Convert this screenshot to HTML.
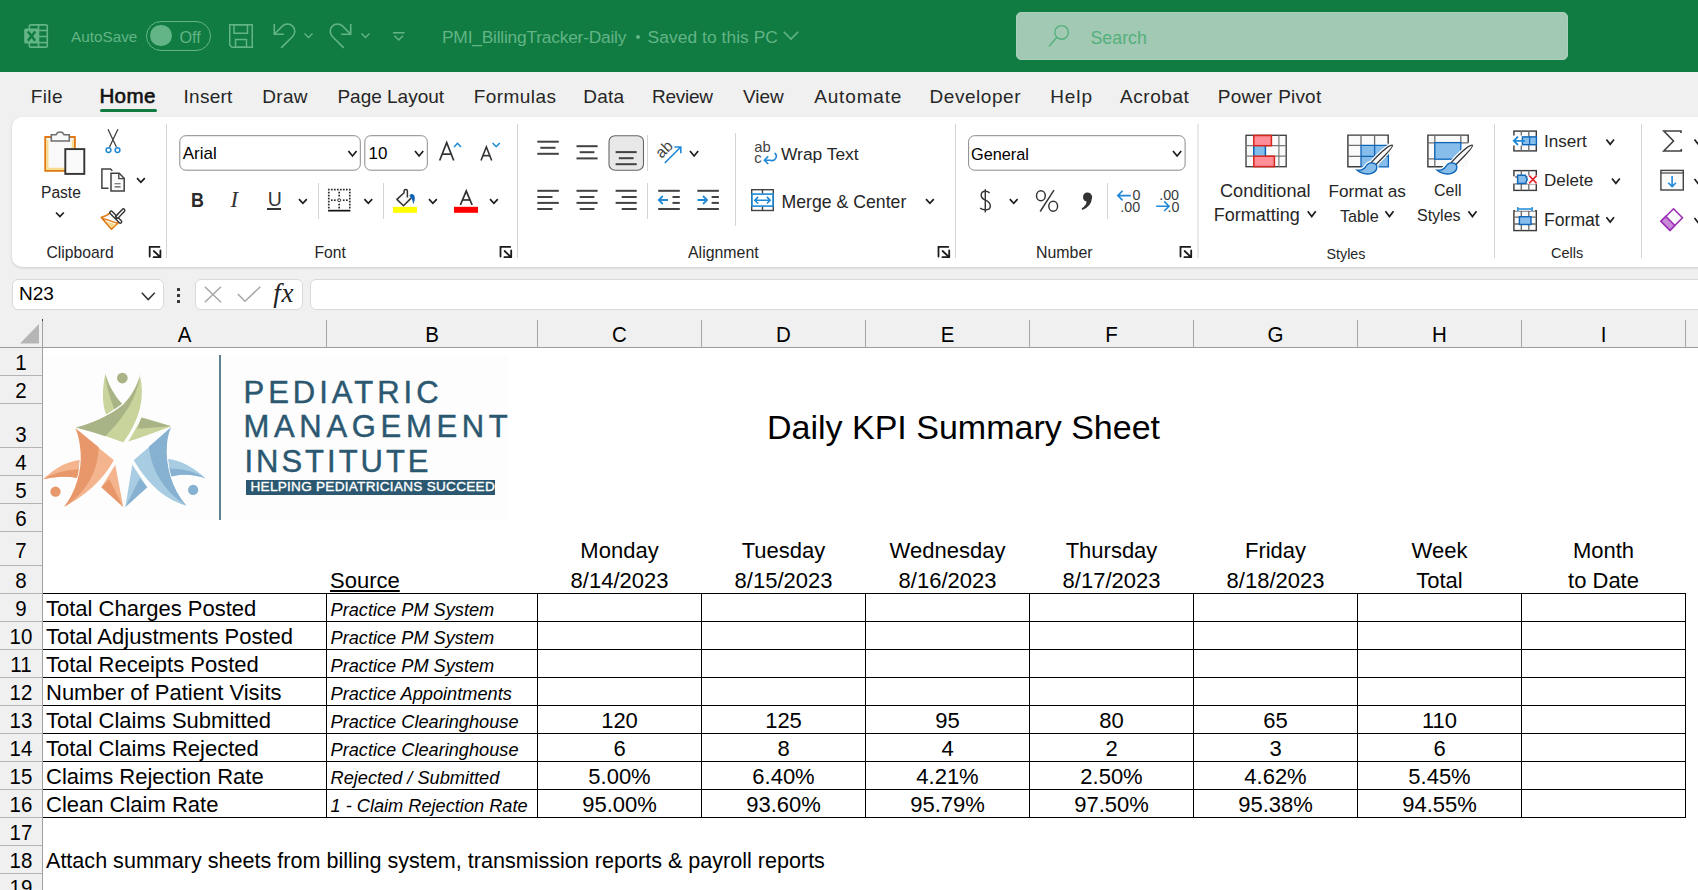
<!DOCTYPE html>
<html><head><meta charset="utf-8"><style>
html,body{margin:0;padding:0;width:1698px;height:890px;overflow:hidden;background:#f0f0f0}
body{position:relative;font-family:"Liberation Sans", sans-serif}
.t{position:absolute;white-space:pre;line-height:0;font-family:"Liberation Sans", sans-serif}
.r{position:absolute}
svg.r{overflow:visible}
</style></head><body>
<div class="r" style="left:0px;top:0px;width:1698px;height:72px;background:#107c41"></div>
<div class="r" style="left:0px;top:72px;width:1698px;height:818px;background:#f0f0f0"></div>
<svg class="r" style="left:24px;top:24px" width="24" height="24" viewBox="0 0 24 24">
<g fill="none" stroke="#63b487" stroke-width="1.6">
<rect x="5.3" y="0.9" width="18" height="22.2" rx="1.4"/>
<line x1="14.5" y1="0.9" x2="14.5" y2="23.1"/>
<line x1="14.5" y1="6.5" x2="23.3" y2="6.5"/>
<line x1="14.5" y1="12.5" x2="23.3" y2="12.5"/>
<line x1="14.5" y1="18.6" x2="23.3" y2="18.6"/>
</g>
<rect x="0.2" y="4.6" width="14.6" height="15" rx="1.5" fill="#63b487"/>
<path d="M3.9 7.5 L11.2 16.8 M11.2 7.5 L3.9 16.8" stroke="#107c41" stroke-width="2.5"/>
</svg>
<div class="t" style="left:71.00px;top:37.00px;font-size:15.3px;color:#63b487;">AutoSave</div>
<div class="r" style="left:146px;top:21px;width:65px;height:30px;box-sizing:border-box;border:1.3px solid #63b487;border-radius:15px"></div>
<div class="r" style="left:150.4px;top:25px;width:21.2px;height:21.2px;background:#63b487;border-radius:50%"></div>
<div class="t" style="left:179.50px;top:36.69px;font-size:16.2px;color:#63b487;">Off</div>
<svg class="r" style="left:229px;top:24px" width="24" height="24" viewBox="0 0 24 24"><g fill="none" stroke="#63b487" stroke-width="1.5">
<path d="M0.75 0.75 H23.25 V23.25 H3 L0.75 21 Z"/>
<rect x="5" y="0.75" width="13.5" height="8.5"/>
<rect x="6.5" y="15.5" width="11" height="7.75"/>
</g></svg>
<svg class="r" style="left:273px;top:24px" width="22" height="24" viewBox="0 0 22 24"><g fill="none" stroke="#63b487" stroke-width="1.6" stroke-linejoin="miter">
<path d="M1.3 0 V10.2 H10.8"/>
<path d="M1.3 10.2 L9.35 2.15 A7.28 7.28 0 0 1 19.65 12.45 L8.2 23.9"/>
</g></svg>
<svg class="r" style="left:304px;top:33px" width="9" height="5" viewBox="0 0 9 5"><path d="M0.5 0.5 L4.5 4.5 L8.5 0.5" fill="none" stroke="#63b487" stroke-width="1.4"/></svg>
<svg class="r" style="left:330px;top:24px" width="22" height="24" viewBox="0 0 22 24"><g fill="none" stroke="#63b487" stroke-width="1.6">
<path d="M20.7 0 V10.2 H11.2"/>
<path d="M20.7 10.2 L12.65 2.15 A7.28 7.28 0 0 0 2.35 12.45 L13.8 23.9"/>
</g></svg>
<svg class="r" style="left:361px;top:33px" width="9" height="5" viewBox="0 0 9 5"><path d="M0.5 0.5 L4.5 4.5 L8.5 0.5" fill="none" stroke="#63b487" stroke-width="1.4"/></svg>
<svg class="r" style="left:393px;top:32px" width="12" height="9" viewBox="0 0 12 9"><path d="M0 0.8 H11.5 M1.5 3.8 L5.75 8 L10 3.8" fill="none" stroke="#63b487" stroke-width="1.5"/></svg>
<div class="t" style="left:442.00px;top:37.37px;font-size:17.4px;color:#63b487;letter-spacing:-0.23px">PMI_BillingTracker-Daily</div>
<div class="r" style="left:635.5px;top:34.6px;width:4px;height:4px;background:#63b487;border-radius:50%"></div>
<div class="t" style="left:647.50px;top:37.37px;font-size:17.4px;color:#63b487;letter-spacing:0.06px">Saved to this PC</div>
<svg class="r" style="left:783px;top:31px" width="16" height="9" viewBox="0 0 16 9"><path d="M0.8 0.8 L8 8 L15.2 0.8" fill="none" stroke="#63b487" stroke-width="1.6"/></svg>
<div class="r" style="left:1016px;top:12px;width:552px;height:47.5px;box-sizing:border-box;background:#a1c9b3;border:1px solid #abcfbb;border-radius:5px"></div>
<svg class="r" style="left:1048px;top:24px" width="22" height="24" viewBox="0 0 22 24"><g fill="none" stroke="#55b07c" stroke-width="1.4">
<circle cx="13.6" cy="8.4" r="6.8"/>
<path d="M8.8 13.2 L1 22.5"/>
</g></svg>
<div class="t" style="left:1090.50px;top:37.63px;font-size:17.8px;color:#55b07c;">Search</div>
<div class="t" style="left:30.80px;top:96.62px;font-size:19px;color:#262626;letter-spacing:0.37px">File</div>
<div class="t" style="left:99.40px;top:96.16px;font-size:20.6px;color:#111;-webkit-text-stroke:0.6px #111;letter-spacing:0.35px">Home</div>
<div class="t" style="left:183.60px;top:96.62px;font-size:19px;color:#262626;letter-spacing:0.24px">Insert</div>
<div class="t" style="left:262.20px;top:96.62px;font-size:19px;color:#262626;letter-spacing:0.33px">Draw</div>
<div class="t" style="left:337.40px;top:96.62px;font-size:19px;color:#262626;letter-spacing:0px">Page Layout</div>
<div class="t" style="left:473.80px;top:96.62px;font-size:19px;color:#262626;letter-spacing:0.43px">Formulas</div>
<div class="t" style="left:583.20px;top:96.62px;font-size:19px;color:#262626;letter-spacing:0.23px">Data</div>
<div class="t" style="left:652.00px;top:96.62px;font-size:19px;color:#262626;letter-spacing:-0.28px">Review</div>
<div class="t" style="left:743.00px;top:96.62px;font-size:19px;color:#262626;letter-spacing:-0.03px">View</div>
<div class="t" style="left:814.20px;top:96.62px;font-size:19px;color:#262626;letter-spacing:0.84px">Automate</div>
<div class="t" style="left:929.60px;top:96.62px;font-size:19px;color:#262626;letter-spacing:0.54px">Developer</div>
<div class="t" style="left:1050.20px;top:96.62px;font-size:19px;color:#262626;letter-spacing:0.93px">Help</div>
<div class="t" style="left:1120.00px;top:96.62px;font-size:19px;color:#262626;letter-spacing:0.57px">Acrobat</div>
<div class="t" style="left:1217.80px;top:96.62px;font-size:19px;color:#262626;letter-spacing:0.2px">Power Pivot</div>
<div class="r" style="left:100.3px;top:108.8px;width:56.5px;height:3.2px;background:#107c41;border-radius:2px"></div>
<div class="r" style="left:12px;top:117px;width:1720px;height:150px;background:#fff;border-radius:10px;box-shadow:0 1px 3px rgba(0,0,0,0.16)"></div>
<svg class="r" style="left:0;top:0" width="1698" height="300" viewBox="0 0 1698 300"><rect x="166" y="124" width="1" height="134" fill="#d4d4d4"/><rect x="517" y="124" width="1" height="134" fill="#d4d4d4"/><rect x="955" y="124" width="1" height="134" fill="#d4d4d4"/><rect x="1197.5" y="124" width="1" height="134" fill="#d4d4d4"/><rect x="1494" y="124" width="1" height="134" fill="#d4d4d4"/><rect x="1641" y="124" width="1" height="134" fill="#d4d4d4"/><rect x="318" y="183" width="1" height="36" fill="#d4d4d4"/><rect x="383" y="183" width="1" height="36" fill="#d4d4d4"/><rect x="647" y="135" width="1" height="36" fill="#d4d4d4"/><rect x="647" y="183" width="1" height="36" fill="#d4d4d4"/><rect x="735" y="133" width="1" height="93" fill="#d4d4d4"/><rect x="1107" y="183" width="1" height="36" fill="#d4d4d4"/>
<rect x="45.3" y="137" width="29.5" height="33.8" fill="#f9f9f9" stroke="#e07b16" stroke-width="2"/>
<path d="M47.4 140 V168.8 H64.5 M72.8 140 V148" fill="none" stroke="#f9dd8f" stroke-width="2.2"/>
<path d="M51.3 141 V134.8 H56 A4.3 4.3 0 0 1 64.1 134.8 H69.3 V141 Z" fill="#f9f9f9" stroke="#6e6e6e" stroke-width="1.6"/>
<rect x="65.3" y="149.1" width="19" height="24.8" fill="#fafafa" stroke="#333" stroke-width="1.9"/>

<path d="M108 129.2 L116.4 147 M117.9 129.2 L109.5 147" fill="none" stroke="#3c3c3c" stroke-width="1.25"/>
<circle cx="108.5" cy="150.1" r="2.4" fill="none" stroke="#1f89d8" stroke-width="1.5"/>
<circle cx="117.5" cy="150.1" r="2.4" fill="none" stroke="#1f89d8" stroke-width="1.5"/>

<path d="M108.5 188.2 H101.9 V168.9 H110.5 L112.3 170.7" fill="none" stroke="#424242" stroke-width="1.5"/>
<path d="M111 173.2 H119.2 L124.2 178.2 V191 H111 Z" fill="#fafafa" stroke="#424242" stroke-width="1.5"/>
<path d="M118.8 173.2 V178.6 H124.2" fill="none" stroke="#424242" stroke-width="1.3"/>
<path d="M114.6 183.7 H120.6 M114.6 186.9 H120.6" stroke="#555" stroke-width="1.1"/>
<path d="M137 178.2 L140.9 182.29999999999998 L144.8 178.2" fill="none" stroke="#1c1c1c" stroke-width="1.7"/>
<path d="M101.3 217.4 Q106.5 216.2 110.9 212.4 L119.6 221.3 Q115.6 225.2 111.5 229.2 Z" fill="#fafafa" stroke="#e07b16" stroke-width="1.7" stroke-linejoin="round"/>
<path d="M102.8 218.3 L118 223.4" stroke="#e07b16" stroke-width="1.4"/>
<path d="M106.6 221.6 L116.2 224.4 L111.6 227.8 Z" fill="#f7d98a"/>
<path d="M111.2 212.6 L120.3 221.7" stroke="#333" stroke-width="4.2" stroke-linecap="round"/>
<path d="M111.2 212.6 L120.3 221.7" stroke="#fff" stroke-width="1.4" stroke-linecap="round"/>
<path d="M117.2 216.8 L123.3 210.4" stroke="#333" stroke-width="4.4" stroke-linecap="round"/>
<path d="M117.6 216.4 L123.3 210.4" stroke="#fff" stroke-width="1.5" stroke-linecap="round"/>
<path d="M56 212.5 L59.9 216.6 L63.8 212.5" fill="none" stroke="#1c1c1c" stroke-width="1.7"/><path d="M149.7 256.6 V246.9 H159.39999999999998" fill="none" stroke="#1c1c1c" stroke-width="1.8" stroke-linecap="round"/><path d="M153.79999999999998 251.0 L159.89999999999998 256.8 M160.39999999999998 250.5 V257.2 H153.6" fill="none" stroke="#1c1c1c" stroke-width="1.8" stroke-linecap="round" stroke-linejoin="round"/>
<rect x="179.8" y="135.7" width="180.5" height="34.5" rx="6" fill="#fff" stroke="#8a8a8a" stroke-width="1"/>
<rect x="364.8" y="135.7" width="62.5" height="34.5" rx="6" fill="#fff" stroke="#8a8a8a" stroke-width="1"/>
<path d="M348.4 151 L352.5 156 L356.59999999999997 151" fill="none" stroke="#1c1c1c" stroke-width="1.7"/><path d="M415 151 L419.1 156 L423.2 151" fill="none" stroke="#1c1c1c" stroke-width="1.7"/><path d="M454 147 L457.5 143.3 L461 147" fill="none" stroke="#1f89d8" stroke-width="1.6"/><path d="M492.6 143 L496.2 146.7 L499.8 143" fill="none" stroke="#1f89d8" stroke-width="1.6"/><path d="M299 199.2 L302.9 203.29999999999998 L306.8 199.2" fill="none" stroke="#1c1c1c" stroke-width="1.7"/><path d="M439.65000000000003 160.5 L446.70000000000005 142.65 L453.75 160.5" fill="none" stroke="#333" stroke-width="1.7" stroke-linejoin="miter"/><path d="M441.96000000000004 154.142 H451.44" stroke="#333" stroke-width="1.7"/><path d="M481.0 160.5 L486.35 147.0 L491.7 160.5" fill="none" stroke="#333" stroke-width="1.6" stroke-linejoin="miter"/><path d="M482.65999999999997 155.638 H490.04" stroke="#333" stroke-width="1.6"/><path d="M460.35 205 L466.25 191.04999999999998 L472.15 205" fill="none" stroke="#333" stroke-width="1.7" stroke-linejoin="miter"/><path d="M462.2 199.968 H470.3" stroke="#333" stroke-width="1.7"/><rect x="327.95" y="188.75" width="1.7" height="1.7" fill="#2a2a2a"/><rect x="330.95" y="188.75" width="1.7" height="1.7" fill="#2a2a2a"/><rect x="333.95" y="188.75" width="1.7" height="1.7" fill="#2a2a2a"/><rect x="336.95" y="188.75" width="1.7" height="1.7" fill="#2a2a2a"/><rect x="339.95" y="188.75" width="1.7" height="1.7" fill="#2a2a2a"/><rect x="342.95" y="188.75" width="1.7" height="1.7" fill="#2a2a2a"/><rect x="345.95" y="188.75" width="1.7" height="1.7" fill="#2a2a2a"/><rect x="348.95" y="188.75" width="1.7" height="1.7" fill="#2a2a2a"/><rect x="327.95" y="191.75" width="1.7" height="1.7" fill="#2a2a2a"/><rect x="348.95" y="191.75" width="1.7" height="1.7" fill="#2a2a2a"/><rect x="327.95" y="194.75" width="1.7" height="1.7" fill="#2a2a2a"/><rect x="348.95" y="194.75" width="1.7" height="1.7" fill="#2a2a2a"/><rect x="327.95" y="197.75" width="1.7" height="1.7" fill="#2a2a2a"/><rect x="348.95" y="197.75" width="1.7" height="1.7" fill="#2a2a2a"/><rect x="327.95" y="200.75" width="1.7" height="1.7" fill="#2a2a2a"/><rect x="348.95" y="200.75" width="1.7" height="1.7" fill="#2a2a2a"/><rect x="327.95" y="203.75" width="1.7" height="1.7" fill="#2a2a2a"/><rect x="348.95" y="203.75" width="1.7" height="1.7" fill="#2a2a2a"/><rect x="327.95" y="206.75" width="1.7" height="1.7" fill="#2a2a2a"/><rect x="348.95" y="206.75" width="1.7" height="1.7" fill="#2a2a2a"/><rect x="338.35" y="191.75" width="1.7" height="1.7" fill="#2a2a2a"/><rect x="338.35" y="194.75" width="1.7" height="1.7" fill="#2a2a2a"/><rect x="338.35" y="203.75" width="1.7" height="1.7" fill="#2a2a2a"/><rect x="338.35" y="206.75" width="1.7" height="1.7" fill="#2a2a2a"/><rect x="330.95" y="199.35" width="1.7" height="1.7" fill="#2a2a2a"/><rect x="333.95" y="199.35" width="1.7" height="1.7" fill="#2a2a2a"/><rect x="342.85" y="199.35" width="1.7" height="1.7" fill="#2a2a2a"/><rect x="345.95" y="199.35" width="1.7" height="1.7" fill="#2a2a2a"/><circle cx="339.2" cy="200.2" r="1.5" fill="none" stroke="#2a2a2a" stroke-width="1"/><rect x="328.1" y="209.8" width="22.3" height="1.7" fill="#111"/><path d="M364.4 199.2 L368.29999999999995 203.29999999999998 L372.2 199.2" fill="none" stroke="#1c1c1c" stroke-width="1.7"/>
<path d="M404.1 192.8 L396.9 199.4 L403.5 205.7 L411.1 198.1 Z" fill="#f8f8f8"/>
<path d="M407.4 197.6 V191.1 A1.65 1.65 0 0 0 404.1 191.1 V192.8 L396.9 199.4 L403.5 205.7 L411.1 198.1" fill="none" stroke="#333" stroke-width="1.5" stroke-linejoin="round"/>
<path d="M409.4 195.5 Q411.8 192.6 414.2 195.5 Q415.8 198.2 413.4 204.2 Q412.6 199.4 409.4 195.5 Z" fill="#0f62b8"/>
<rect x="393" y="206.9" width="24" height="5.9" fill="#ffff00"/>
<path d="M429 199.2 L432.9 203.29999999999998 L436.8 199.2" fill="none" stroke="#1c1c1c" stroke-width="1.7"/><rect x="454" y="206.8" width="24" height="6" fill="#ff0000"/><path d="M490 199.2 L493.9 203.29999999999998 L497.8 199.2" fill="none" stroke="#1c1c1c" stroke-width="1.7"/><path d="M500.5 256.6 V246.9 H510.2" fill="none" stroke="#1c1c1c" stroke-width="1.8" stroke-linecap="round"/><path d="M504.6 251.0 L510.7 256.8 M511.2 250.5 V257.2 H504.4" fill="none" stroke="#1c1c1c" stroke-width="1.8" stroke-linecap="round" stroke-linejoin="round"/><rect x="537.3" y="140.7" width="21.5" height="2" fill="#424242"/><rect x="540.3" y="146.8" width="15.200000000000045" height="2" fill="#424242"/><rect x="537.3" y="152.8" width="21.5" height="2" fill="#424242"/><rect x="576.5" y="145.2" width="21.100000000000023" height="2" fill="#424242"/><rect x="579.7" y="151.2" width="14.699999999999932" height="2" fill="#424242"/><rect x="576.5" y="157.4" width="21.100000000000023" height="2" fill="#424242"/><rect x="609" y="135.7" width="34.5" height="34.5" rx="6" fill="#e8e8e8" stroke="#666" stroke-width="1.1"/><rect x="615.6" y="151.1" width="21.100000000000023" height="2" fill="#424242"/><rect x="618.8" y="157.2" width="14.800000000000068" height="2" fill="#424242"/><rect x="615.6" y="163.2" width="21.100000000000023" height="2" fill="#424242"/><text x="0" y="0" transform="translate(661.6,159) rotate(-45)" font-family="Liberation Sans" font-size="15.5" fill="#424242">ab</text>
<path d="M664.8 163 L680.5 147.3 M674.5 147 H680.8 V153.3" fill="none" stroke="#1f89d8" stroke-width="1.6"/><path d="M690 151 L694.1 156 L698.2 151" fill="none" stroke="#1c1c1c" stroke-width="1.7"/><rect x="537.3" y="189.8" width="21.5" height="2" fill="#424242"/><rect x="537.3" y="196" width="15.200000000000045" height="2" fill="#424242"/><rect x="537.3" y="201.9" width="21.5" height="2" fill="#424242"/><rect x="537.3" y="208" width="15.200000000000045" height="2" fill="#424242"/><rect x="576.5" y="189.8" width="21.100000000000023" height="2" fill="#424242"/><rect x="579.7" y="196" width="14.699999999999932" height="2" fill="#424242"/><rect x="576.5" y="201.9" width="21.100000000000023" height="2" fill="#424242"/><rect x="579.7" y="208" width="14.699999999999932" height="2" fill="#424242"/><rect x="615.6" y="189.8" width="21.100000000000023" height="2" fill="#424242"/><rect x="621.7" y="196" width="15.0" height="2" fill="#424242"/><rect x="615.6" y="201.9" width="21.100000000000023" height="2" fill="#424242"/><rect x="621.7" y="208" width="15.0" height="2" fill="#424242"/><rect x="658.2" y="189.8" width="21.59999999999991" height="2" fill="#424242"/><rect x="672.5" y="196" width="7.2999999999999545" height="2" fill="#424242"/><rect x="672.5" y="201.9" width="7.2999999999999545" height="2" fill="#424242"/><rect x="658.2" y="208" width="21.59999999999991" height="2" fill="#424242"/><path d="M668 200 H658.8 M662.8 196 L658.8 200 L662.8 204" fill="none" stroke="#1f89d8" stroke-width="1.8"/><rect x="697.3" y="189.8" width="21.600000000000023" height="2" fill="#424242"/><rect x="711.6" y="196" width="7.2999999999999545" height="2" fill="#424242"/><rect x="711.6" y="201.9" width="7.2999999999999545" height="2" fill="#424242"/><rect x="697.3" y="208" width="21.600000000000023" height="2" fill="#424242"/><path d="M697.5 200 H707 M703 196 L707 200 L703 204" fill="none" stroke="#1f89d8" stroke-width="1.8"/><text x="754.2" y="152.2" font-family="Liberation Sans" font-size="14.8" fill="#424242">ab</text>
<text x="754.2" y="163.2" font-family="Liberation Sans" font-size="14.8" fill="#424242">c</text>
<path d="M774.6 153 A4.2 4.2 0 0 1 770.4 160.2 H764.6 M768.2 156.4 L764.4 160.2 L768.2 164" fill="none" stroke="#1f89d8" stroke-width="1.6"/><rect x="751.7" y="189.7" width="21.6" height="20.8" fill="#fff" stroke="#424242" stroke-width="1.4"/>
<path d="M762.5 189.7 V193.5 M762.5 206.5 V210.5" stroke="#424242" stroke-width="1.4"/>
<rect x="752" y="194.1" width="21" height="12" fill="#fff" stroke="#1f89d8" stroke-width="1.6"/>
<path d="M754.8 200.2 H770.2 M758.1 196.9 L754.8 200.2 L758.1 203.5 M766.9 196.9 L770.2 200.2 L766.9 203.5" fill="none" stroke="#1f89d8" stroke-width="1.6"/><path d="M926 199.2 L929.9 203.29999999999998 L933.8 199.2" fill="none" stroke="#1c1c1c" stroke-width="1.7"/><path d="M938.5 256.6 V246.9 H948.2" fill="none" stroke="#1c1c1c" stroke-width="1.8" stroke-linecap="round"/><path d="M942.6 251.0 L948.7 256.8 M949.2 250.5 V257.2 H942.4" fill="none" stroke="#1c1c1c" stroke-width="1.8" stroke-linecap="round" stroke-linejoin="round"/><rect x="968.6" y="135.7" width="216.5" height="34.5" rx="6" fill="#fff" stroke="#8a8a8a" stroke-width="1"/><path d="M1173 151 L1177.1 156 L1181.2 151" fill="none" stroke="#1c1c1c" stroke-width="1.7"/><path d="M1009.8 199.2 L1013.6999999999999 203.29999999999998 L1017.5999999999999 199.2" fill="none" stroke="#1c1c1c" stroke-width="1.7"/><path d="M1130.8 195.6 H1117.8 M1122.6 190.8 L1117.8 195.6 L1122.6 200.4" fill="none" stroke="#1f89d8" stroke-width="1.6"/>
<path d="M1156.2 206.2 H1169 M1164.2 201.4 L1169 206.2 L1164.2 211" fill="none" stroke="#1f89d8" stroke-width="1.6"/><path d="M1180.5 256.6 V246.9 H1190.2" fill="none" stroke="#1c1c1c" stroke-width="1.8" stroke-linecap="round"/><path d="M1184.6 251.0 L1190.7 256.8 M1191.2 250.5 V257.2 H1184.4" fill="none" stroke="#1c1c1c" stroke-width="1.8" stroke-linecap="round" stroke-linejoin="round"/><path d="M989.6 193 Q988 191.3 985.3 191.3 Q981.2 191.3 981.2 195.3 Q981.2 198.4 985.4 200.2 Q990.3 202.3 990.3 205.9 Q990.3 209.8 985.3 209.8 Q982.1 209.8 980.1 208" fill="none" stroke="#333" stroke-width="1.45"/><path d="M985.3 189.2 V212.4" stroke="#333" stroke-width="1.45"/><ellipse cx="1040.9" cy="195.8" rx="4.4" ry="5" fill="none" stroke="#333" stroke-width="1.45"/><ellipse cx="1053.2" cy="206.3" rx="4.4" ry="5" fill="none" stroke="#333" stroke-width="1.45"/><path d="M1054 190.2 L1040.2 211.5" stroke="#333" stroke-width="1.45"/><path d="M1086.8 192.6 A4.6 4.6 0 0 1 1091.9 198.6 Q1091.3 206.6 1082.3 210 L1081.6 208.6 Q1086.2 205.8 1086.6 201.6 A4.6 4.6 0 0 1 1086.8 192.6 Z" fill="#333"/><rect x="1246" y="135.3" width="40.2" height="31.4" fill="#fafafa" stroke="#444" stroke-width="1.4"/>
<path d="M1278.9 135.3 V166.7 M1246 145.6 H1286.2 M1246 156.2 H1286.2" stroke="#7a7a7a" stroke-width="1.2"/>
<rect x="1253.8" y="145.8" width="11.6" height="10.2" fill="#80bdea"/>
<path d="M1253.8 145.8 V156 M1265.4 145.8 V156" stroke="#0a63b6" stroke-width="1.5"/>
<rect x="1253.8" y="135.5" width="17.6" height="10.2" fill="#ff8e98" stroke="#d8261c" stroke-width="1.5"/>
<rect x="1253.8" y="156.2" width="20.6" height="10.4" fill="#ff8e98" stroke="#d8261c" stroke-width="1.5"/><rect x="1347.9" y="135.1" width="40.3" height="31.6" fill="#fafafa"/>
<path d="M1388.2 143.8 V135.1 H1347.9 V166.7 H1361" fill="none" stroke="#3a3a3a" stroke-width="1.4"/>
<path d="M1361 135.1 V145.3 M1374.6 135.1 V145.3 M1347.9 145.3 H1361 M1347.9 156.4 H1361" stroke="#6e6e6e" stroke-width="1.3"/>
<rect x="1361" y="145.3" width="27.4" height="21.6" fill="#86bdea"/>
<path d="M1361 166.9 V145.3 H1388.4 V166.9 H1361 M1374.6 145.3 V166.9 M1361 156.4 H1388.4" fill="none" stroke="#0f65b8" stroke-width="1.3"/><path d="M1392.4 145.2 C1394 147.2 1380 160.5 1375 165.4 L1371.2 162.6 C1376 157 1389.5 143.6 1392.4 145.2 Z" fill="none" stroke="#fff" stroke-width="3.6"/><path d="M1374.4 163.4 C1378 165 1378 171.2 1371.6 173.4 C1366 175.2 1360 172.6 1357.2 170.2 C1361.5 170.5 1364 169 1365.5 166.8 C1367.5 163.4 1371 162.3 1374.4 163.4 Z" fill="none" stroke="#fff" stroke-width="3.6"/><path d="M1392.4 145.2 C1394 147.2 1380 160.5 1375 165.4 L1371.2 162.6 C1376 157 1389.5 143.6 1392.4 145.2 Z" fill="#fafafa" stroke="#333" stroke-width="1.3"/><path d="M1374.4 163.4 C1378 165 1378 171.2 1371.6 173.4 C1366 175.2 1360 172.6 1357.2 170.2 C1361.5 170.5 1364 169 1365.5 166.8 C1367.5 163.4 1371 162.3 1374.4 163.4 Z" fill="#86bdea" stroke="#0f65b8" stroke-width="1.4"/><rect x="1427.9" y="135.1" width="40.3" height="31.6" fill="#fafafa"/>
<path d="M1468.2 142.8 V135.1 H1427.9 V166.7 H1443" fill="none" stroke="#3a3a3a" stroke-width="1.4"/>
<path d="M1434.8 135.1 V166.7 M1460.8 135.1 V142.6 M1427.9 142.8 H1468.2 M1427.9 158.9 H1434.8" stroke="#6e6e6e" stroke-width="1.3"/>
<rect x="1434.8" y="142.6" width="26" height="16.6" fill="#86bdea" stroke="#0f65b8" stroke-width="1.3"/><path d="M1472.4 145.2 C1474 147.2 1460 160.5 1455 165.4 L1451.2 162.6 C1456 157 1469.5 143.6 1472.4 145.2 Z" fill="none" stroke="#fff" stroke-width="3.6"/><path d="M1454.4 163.4 C1458 165 1458 171.2 1451.6 173.4 C1446 175.2 1440 172.6 1437.2 170.2 C1441.5 170.5 1444 169 1445.5 166.8 C1447.5 163.4 1451 162.3 1454.4 163.4 Z" fill="none" stroke="#fff" stroke-width="3.6"/><path d="M1472.4 145.2 C1474 147.2 1460 160.5 1455 165.4 L1451.2 162.6 C1456 157 1469.5 143.6 1472.4 145.2 Z" fill="#fafafa" stroke="#333" stroke-width="1.3"/><path d="M1454.4 163.4 C1458 165 1458 171.2 1451.6 173.4 C1446 175.2 1440 172.6 1437.2 170.2 C1441.5 170.5 1444 169 1445.5 166.8 C1447.5 163.4 1451 162.3 1454.4 163.4 Z" fill="#86bdea" stroke="#0f65b8" stroke-width="1.4"/><path d="M1307.8 211.3 L1311.75 216.60000000000002 L1315.7 211.3" fill="none" stroke="#1c1c1c" stroke-width="1.7"/><path d="M1385.4 211.3 L1389.45 216.60000000000002 L1393.5 211.3" fill="none" stroke="#1c1c1c" stroke-width="1.7"/><path d="M1468.4 211.3 L1472.45 216.60000000000002 L1476.5 211.3" fill="none" stroke="#1c1c1c" stroke-width="1.7"/><rect x="1513.9" y="131.1" width="22.4" height="19.8" fill="#fafafa" stroke="#3a3a3a" stroke-width="1.4"/><path d="M1521.3 131.1 V150.9 M1528.8 131.1 V150.9 M1513.9 137.5 H1536.3 M1513.9 144.29999999999998 H1536.3" stroke="#6a6a6a" stroke-width="1.3"/><rect x="1512" y="135.5" width="12" height="10" fill="#fff"/><rect x="1522.4" y="136.9" width="14" height="7.8" fill="#86bdea" stroke="#0f65b8" stroke-width="1.4"/><path d="M1529.6 136.9 V144.7" stroke="#0f65b8" stroke-width="1.2"/><path d="M1525 140.8 H1514.2 M1518 136.6 L1513.8 140.8 L1518 145" fill="none" stroke="#1f89d8" stroke-width="1.8"/><rect x="1513.9" y="170.6" width="22.4" height="19.8" fill="#fafafa" stroke="#3a3a3a" stroke-width="1.4"/><path d="M1521.3 170.6 V190.4 M1528.8 170.6 V190.4 M1513.9 177.0 H1536.3 M1513.9 183.79999999999998 H1536.3" stroke="#6a6a6a" stroke-width="1.3"/><rect x="1512" y="176.3" width="3.2" height="7.2" fill="#fff"/><rect x="1527.5" y="175.5" width="10" height="8.6" fill="#fff"/><path d="M1517.6 175.3 H1525.4 L1527.3 179.4 L1525.4 183.5 H1517.6 Z" fill="#86bdea" stroke="#0f65b8" stroke-width="1.4"/><path d="M1529.2 175.6 L1536.6 183.4 M1536.6 175.6 L1529.2 183.4" stroke="#e8262b" stroke-width="1.6"/><rect x="1513.9" y="210.8" width="22.4" height="19.8" fill="#fafafa" stroke="#3a3a3a" stroke-width="1.4"/><path d="M1521.3 210.8 V230.60000000000002 M1528.8 210.8 V230.60000000000002 M1513.9 217.20000000000002 H1536.3 M1513.9 224.0 H1536.3" stroke="#6a6a6a" stroke-width="1.3"/><rect x="1515" y="209" width="20" height="1.8" fill="#fff"/><rect x="1519.4" y="216.7" width="11.6" height="7.8" fill="#86bdea" stroke="#0f65b8" stroke-width="1.4"/><path d="M1517.8 209 H1532.2 M1517.8 207 V211 M1532.2 207 V211" stroke="#1f89d8" stroke-width="1.4"/><path d="M1606.4 139.5 L1610.2 144.3 L1614.0 139.5" fill="none" stroke="#1c1c1c" stroke-width="1.7"/><path d="M1612 178.5 L1615.9 183.3 L1619.8 178.5" fill="none" stroke="#1c1c1c" stroke-width="1.7"/><path d="M1606.4 217.3 L1610.2 222.10000000000002 L1614.0 217.3" fill="none" stroke="#1c1c1c" stroke-width="1.7"/><path d="M1681 133 V131 H1663.8 L1673.5 141 L1663.8 151 H1681.3 V149" fill="none" stroke="#424242" stroke-width="1.6"/><rect x="1660.9" y="170.4" width="22.4" height="19.6" fill="#fafafa" stroke="#424242" stroke-width="1.4"/>
<path d="M1660.9 173 H1683.3" stroke="#424242" stroke-width="1.2"/>
<path d="M1672.1 176 V186.5 M1668.3 182.8 L1672.1 186.6 L1675.9 182.8" fill="none" stroke="#1f89d8" stroke-width="1.6"/><path d="M1661 221.3 L1673.5 208.8 L1682.5 217.8 L1670 230.3 Z" fill="#fafafa" stroke="#9b30b5" stroke-width="1.6"/>
<path d="M1661 221.3 L1665.8 216.5 L1674.8 225.5 L1670 230.3 Z" fill="#c88bd8" stroke="#9b30b5" stroke-width="1.6"/><path d="M1694.5 139.5 L1698.5 144.5 L1702.5 139.5" fill="none" stroke="#1c1c1c" stroke-width="1.7"/><path d="M1694.5 179 L1698.5 184 L1702.5 179" fill="none" stroke="#1c1c1c" stroke-width="1.7"/><path d="M1694.5 218 L1698.5 223 L1702.5 218" fill="none" stroke="#1c1c1c" stroke-width="1.7"/></svg>
<div class="t" style="left:41.00px;top:193.19px;font-size:15.6px;color:#262626;">Paste</div>
<div class="t" style="left:46.50px;top:252.76px;font-size:15.7px;color:#262626;">Clipboard</div>
<div class="t" style="left:182.70px;top:154.11px;font-size:17px;color:#000;">Arial</div>
<div class="t" style="left:368.50px;top:154.11px;font-size:17px;color:#000;">10</div>
<div class="t" style="left:191.20px;top:199.99px;font-size:20.8px;color:#2a2a2a;font-weight:bold;transform:scaleX(0.86);transform-origin:0 0">B</div>
<div class="t" style="left:230.60px;top:199.50px;font-size:22.5px;color:#333;font-family:'Liberation Serif';font-style:italic">I</div>
<div class="t" style="left:267.70px;top:199.24px;font-size:19.5px;color:#333;">U</div>
<div class="r" style="left:267.4px;top:208.4px;width:13.5px;height:1.5px;background:#333"></div>
<div class="t" style="left:314.50px;top:252.76px;font-size:15.7px;color:#262626;">Font</div>
<div class="t" style="left:781.00px;top:154.07px;font-size:17.4px;color:#262626;">Wrap Text</div>
<div class="t" style="left:781.50px;top:201.87px;font-size:17.7px;color:#262626;">Merge &amp; Center</div>
<div class="t" style="left:688.00px;top:252.69px;font-size:15.9px;color:#262626;">Alignment</div>
<div class="t" style="left:971.00px;top:154.35px;font-size:16.3px;color:#000;">General</div>
<div class="t" style="left:1132.60px;top:194.65px;font-size:14.3px;color:#3a3a3a;">0</div>
<div class="t" style="left:1120.30px;top:206.75px;font-size:14.3px;color:#3a3a3a;">.00</div>
<div class="t" style="left:1159.20px;top:194.65px;font-size:14.3px;color:#3a3a3a;">.00</div>
<div class="t" style="left:1167.50px;top:206.75px;font-size:14.3px;color:#3a3a3a;">.0</div>
<div class="t" style="left:1036.00px;top:252.69px;font-size:15.9px;color:#262626;">Number</div>
<div class="t" style="left:1220.00px;top:190.63px;font-size:18.1px;color:#262626;">Conditional</div>
<div class="t" style="left:1213.80px;top:215.16px;font-size:18px;color:#262626;">Formatting</div>
<div class="t" style="left:1328.50px;top:190.94px;font-size:17.2px;color:#262626;">Format as</div>
<div class="t" style="left:1340.00px;top:215.79px;font-size:16.2px;color:#262626;">Table</div>
<div class="t" style="left:1434.00px;top:191.36px;font-size:16px;color:#262626;">Cell</div>
<div class="t" style="left:1417.00px;top:215.86px;font-size:16px;color:#262626;">Styles</div>
<div class="t" style="left:1326.50px;top:253.55px;font-size:14.3px;color:#262626;">Styles</div>
<div class="t" style="left:1544.00px;top:141.87px;font-size:17.1px;color:#262626;">Insert</div>
<div class="t" style="left:1544.00px;top:180.91px;font-size:17px;color:#262626;">Delete</div>
<div class="t" style="left:1544.00px;top:219.50px;font-size:17.6px;color:#262626;">Format</div>
<div class="t" style="left:1551.00px;top:253.28px;font-size:14.5px;color:#262626;">Cells</div>
<div class="r" style="left:12.4px;top:279px;width:151.2px;height:31px;box-sizing:border-box;background:#fff;border:1px solid #d9d9d9;border-radius:6px"></div>
<div class="t" style="left:19.00px;top:294.42px;font-size:19px;color:#000;">N23</div>
<svg class="r" style="left:141px;top:292px" width="15" height="9" viewBox="0 0 15 9"><path d="M0.8 0.8 L7.2 7.6 L13.8 0.8" fill="none" stroke="#333" stroke-width="1.5"/></svg>
<div class="r" style="left:177px;top:287.5px;width:3.2px;height:3.2px;background:#333;border-radius:0.5px"></div>
<div class="r" style="left:177px;top:293.5px;width:3.2px;height:3.2px;background:#333;border-radius:0.5px"></div>
<div class="r" style="left:177px;top:299.5px;width:3.2px;height:3.2px;background:#333;border-radius:0.5px"></div>
<div class="r" style="left:194.6px;top:279px;width:108.8px;height:31px;box-sizing:border-box;background:#fff;border:1px solid #d9d9d9;border-radius:6px"></div>
<svg class="r" style="left:204px;top:286px" width="18" height="17" viewBox="0 0 18 17"><path d="M0.8 0.8 L17 16.2 M17 0.8 L0.8 16.2" stroke="#a6a6a6" stroke-width="1.5"/></svg>
<svg class="r" style="left:237px;top:286px" width="24" height="16" viewBox="0 0 24 16"><path d="M0.8 8 L8 15.2 L23.3 0.8" fill="none" stroke="#a6a6a6" stroke-width="1.5"/></svg>
<div class="t" style="left:273.20px;top:292.64px;font-size:27px;color:#222;font-family:'Liberation Serif';font-style:italic;letter-spacing:0.8px">fx</div>
<div class="r" style="left:310.4px;top:279px;width:1420px;height:31px;box-sizing:border-box;background:#fff;border:1px solid #d9d9d9;border-radius:6px"></div>
<div class="r" style="left:0px;top:320px;width:1698px;height:28px;background:#f0f0f0"></div>
<div class="r" style="left:0px;top:347px;width:1698px;height:1px;background:#9c9c9c"></div>
<div class="r" style="left:326px;top:320px;width:1px;height:27px;background:#a6a6a6"></div>
<div class="r" style="left:537px;top:320px;width:1px;height:27px;background:#a6a6a6"></div>
<div class="r" style="left:701px;top:320px;width:1px;height:27px;background:#a6a6a6"></div>
<div class="r" style="left:865px;top:320px;width:1px;height:27px;background:#a6a6a6"></div>
<div class="r" style="left:1029px;top:320px;width:1px;height:27px;background:#a6a6a6"></div>
<div class="r" style="left:1193px;top:320px;width:1px;height:27px;background:#a6a6a6"></div>
<div class="r" style="left:1357px;top:320px;width:1px;height:27px;background:#a6a6a6"></div>
<div class="r" style="left:1521px;top:320px;width:1px;height:27px;background:#a6a6a6"></div>
<div class="r" style="left:1685px;top:320px;width:1px;height:27px;background:#a6a6a6"></div>
<div class="r" style="left:42px;top:320px;width:1px;height:28px;background:#a0a0a0"></div>
<div class="r" style="left:42px;top:319px;width:1px;height:2px;background:#333"></div>
<svg class="r" style="left:20px;top:324px" width="19" height="20" viewBox="0 0 19 20"><path d="M19 0 V19.5 H0 Z" fill="#b5b5b5"/></svg>
<div class="t" style="left:-115.50px;width:600px;text-align:center;top:334.90px;font-size:20.5px;color:#000;transform:scaleY(1.12);transform-origin:0 7.1px">A</div>
<div class="t" style="left:132.00px;width:600px;text-align:center;top:334.90px;font-size:20.5px;color:#000;transform:scaleY(1.12);transform-origin:0 7.1px">B</div>
<div class="t" style="left:319.50px;width:600px;text-align:center;top:334.90px;font-size:20.5px;color:#000;transform:scaleY(1.12);transform-origin:0 7.1px">C</div>
<div class="t" style="left:483.50px;width:600px;text-align:center;top:334.90px;font-size:20.5px;color:#000;transform:scaleY(1.12);transform-origin:0 7.1px">D</div>
<div class="t" style="left:647.50px;width:600px;text-align:center;top:334.90px;font-size:20.5px;color:#000;transform:scaleY(1.12);transform-origin:0 7.1px">E</div>
<div class="t" style="left:811.50px;width:600px;text-align:center;top:334.90px;font-size:20.5px;color:#000;transform:scaleY(1.12);transform-origin:0 7.1px">F</div>
<div class="t" style="left:975.50px;width:600px;text-align:center;top:334.90px;font-size:20.5px;color:#000;transform:scaleY(1.12);transform-origin:0 7.1px">G</div>
<div class="t" style="left:1139.50px;width:600px;text-align:center;top:334.90px;font-size:20.5px;color:#000;transform:scaleY(1.12);transform-origin:0 7.1px">H</div>
<div class="t" style="left:1303.50px;width:600px;text-align:center;top:334.90px;font-size:20.5px;color:#000;transform:scaleY(1.12);transform-origin:0 7.1px">I</div>
<div class="r" style="left:43px;top:348px;width:1655px;height:542px;background:#fff"></div>
<div class="r" style="left:0px;top:348px;width:42px;height:542px;background:#f0f0f0"></div>
<div class="r" style="left:42px;top:348px;width:1px;height:542px;background:#a0a0a0"></div>
<div class="r" style="left:0px;top:375px;width:42px;height:1px;background:#b4b4b4"></div>
<div class="r" style="left:0px;top:403px;width:42px;height:1px;background:#b4b4b4"></div>
<div class="r" style="left:0px;top:447px;width:42px;height:1px;background:#b4b4b4"></div>
<div class="r" style="left:0px;top:475px;width:42px;height:1px;background:#b4b4b4"></div>
<div class="r" style="left:0px;top:503px;width:42px;height:1px;background:#b4b4b4"></div>
<div class="r" style="left:0px;top:531px;width:42px;height:1px;background:#b4b4b4"></div>
<div class="r" style="left:0px;top:565px;width:42px;height:1px;background:#b4b4b4"></div>
<div class="r" style="left:0px;top:593px;width:42px;height:1px;background:#b4b4b4"></div>
<div class="r" style="left:0px;top:621px;width:42px;height:1px;background:#b4b4b4"></div>
<div class="r" style="left:0px;top:649px;width:42px;height:1px;background:#b4b4b4"></div>
<div class="r" style="left:0px;top:677px;width:42px;height:1px;background:#b4b4b4"></div>
<div class="r" style="left:0px;top:705px;width:42px;height:1px;background:#b4b4b4"></div>
<div class="r" style="left:0px;top:733px;width:42px;height:1px;background:#b4b4b4"></div>
<div class="r" style="left:0px;top:761px;width:42px;height:1px;background:#b4b4b4"></div>
<div class="r" style="left:0px;top:789px;width:42px;height:1px;background:#b4b4b4"></div>
<div class="r" style="left:0px;top:817px;width:42px;height:1px;background:#b4b4b4"></div>
<div class="r" style="left:0px;top:845px;width:42px;height:1px;background:#b4b4b4"></div>
<div class="r" style="left:0px;top:873px;width:42px;height:1px;background:#b4b4b4"></div>
<div class="t" style="left:-279.00px;width:600px;text-align:center;top:362.90px;font-size:20.5px;color:#000;transform:scaleY(1.12);transform-origin:0 7.1px">1</div>
<div class="t" style="left:-279.00px;width:600px;text-align:center;top:390.90px;font-size:20.5px;color:#000;transform:scaleY(1.12);transform-origin:0 7.1px">2</div>
<div class="t" style="left:-279.00px;width:600px;text-align:center;top:434.90px;font-size:20.5px;color:#000;transform:scaleY(1.12);transform-origin:0 7.1px">3</div>
<div class="t" style="left:-279.00px;width:600px;text-align:center;top:462.90px;font-size:20.5px;color:#000;transform:scaleY(1.12);transform-origin:0 7.1px">4</div>
<div class="t" style="left:-279.00px;width:600px;text-align:center;top:490.90px;font-size:20.5px;color:#000;transform:scaleY(1.12);transform-origin:0 7.1px">5</div>
<div class="t" style="left:-279.00px;width:600px;text-align:center;top:518.90px;font-size:20.5px;color:#000;transform:scaleY(1.12);transform-origin:0 7.1px">6</div>
<div class="t" style="left:-279.00px;width:600px;text-align:center;top:550.90px;font-size:20.5px;color:#000;transform:scaleY(1.12);transform-origin:0 7.1px">7</div>
<div class="t" style="left:-279.00px;width:600px;text-align:center;top:580.90px;font-size:20.5px;color:#000;transform:scaleY(1.12);transform-origin:0 7.1px">8</div>
<div class="t" style="left:-279.00px;width:600px;text-align:center;top:608.90px;font-size:20.5px;color:#000;transform:scaleY(1.12);transform-origin:0 7.1px">9</div>
<div class="t" style="left:-279.00px;width:600px;text-align:center;top:636.90px;font-size:20.5px;color:#000;transform:scaleY(1.12);transform-origin:0 7.1px">10</div>
<div class="t" style="left:-279.00px;width:600px;text-align:center;top:664.90px;font-size:20.5px;color:#000;transform:scaleY(1.12);transform-origin:0 7.1px">11</div>
<div class="t" style="left:-279.00px;width:600px;text-align:center;top:692.90px;font-size:20.5px;color:#000;transform:scaleY(1.12);transform-origin:0 7.1px">12</div>
<div class="t" style="left:-279.00px;width:600px;text-align:center;top:720.90px;font-size:20.5px;color:#000;transform:scaleY(1.12);transform-origin:0 7.1px">13</div>
<div class="t" style="left:-279.00px;width:600px;text-align:center;top:748.90px;font-size:20.5px;color:#000;transform:scaleY(1.12);transform-origin:0 7.1px">14</div>
<div class="t" style="left:-279.00px;width:600px;text-align:center;top:776.90px;font-size:20.5px;color:#000;transform:scaleY(1.12);transform-origin:0 7.1px">15</div>
<div class="t" style="left:-279.00px;width:600px;text-align:center;top:804.90px;font-size:20.5px;color:#000;transform:scaleY(1.12);transform-origin:0 7.1px">16</div>
<div class="t" style="left:-279.00px;width:600px;text-align:center;top:832.90px;font-size:20.5px;color:#000;transform:scaleY(1.12);transform-origin:0 7.1px">17</div>
<div class="t" style="left:-279.00px;width:600px;text-align:center;top:860.90px;font-size:20.5px;color:#000;transform:scaleY(1.12);transform-origin:0 7.1px">18</div>
<div class="t" style="left:-279.00px;width:600px;text-align:center;top:887.90px;font-size:20.5px;color:#000;transform:scaleY(1.12);transform-origin:0 7.1px">19</div>
<div class="r" style="left:43px;top:593px;width:1643px;height:1px;background:#000"></div>
<div class="r" style="left:43px;top:621px;width:1643px;height:1px;background:#000"></div>
<div class="r" style="left:43px;top:649px;width:1643px;height:1px;background:#000"></div>
<div class="r" style="left:43px;top:677px;width:1643px;height:1px;background:#000"></div>
<div class="r" style="left:43px;top:705px;width:1643px;height:1px;background:#000"></div>
<div class="r" style="left:43px;top:733px;width:1643px;height:1px;background:#000"></div>
<div class="r" style="left:43px;top:761px;width:1643px;height:1px;background:#000"></div>
<div class="r" style="left:43px;top:789px;width:1643px;height:1px;background:#000"></div>
<div class="r" style="left:43px;top:817px;width:1643px;height:1px;background:#000"></div>
<div class="r" style="left:326px;top:593px;width:1px;height:225px;background:#000"></div>
<div class="r" style="left:537px;top:593px;width:1px;height:225px;background:#000"></div>
<div class="r" style="left:701px;top:593px;width:1px;height:225px;background:#000"></div>
<div class="r" style="left:865px;top:593px;width:1px;height:225px;background:#000"></div>
<div class="r" style="left:1029px;top:593px;width:1px;height:225px;background:#000"></div>
<div class="r" style="left:1193px;top:593px;width:1px;height:225px;background:#000"></div>
<div class="r" style="left:1357px;top:593px;width:1px;height:225px;background:#000"></div>
<div class="r" style="left:1521px;top:593px;width:1px;height:225px;background:#000"></div>
<div class="r" style="left:1685px;top:593px;width:1px;height:225px;background:#000"></div>
<div class="t" style="left:767.00px;top:426.82px;font-size:34px;color:#000;">Daily KPI Summary Sheet</div>
<div class="t" style="left:319.50px;width:600px;text-align:center;top:551.38px;font-size:22px;color:#000;">Monday</div>
<div class="t" style="left:319.50px;width:600px;text-align:center;top:581.38px;font-size:22px;color:#000;">8/14/2023</div>
<div class="t" style="left:483.50px;width:600px;text-align:center;top:551.38px;font-size:22px;color:#000;">Tuesday</div>
<div class="t" style="left:483.50px;width:600px;text-align:center;top:581.38px;font-size:22px;color:#000;">8/15/2023</div>
<div class="t" style="left:647.50px;width:600px;text-align:center;top:551.38px;font-size:22px;color:#000;">Wednesday</div>
<div class="t" style="left:647.50px;width:600px;text-align:center;top:581.38px;font-size:22px;color:#000;">8/16/2023</div>
<div class="t" style="left:811.50px;width:600px;text-align:center;top:551.38px;font-size:22px;color:#000;">Thursday</div>
<div class="t" style="left:811.50px;width:600px;text-align:center;top:581.38px;font-size:22px;color:#000;">8/17/2023</div>
<div class="t" style="left:975.50px;width:600px;text-align:center;top:551.38px;font-size:22px;color:#000;">Friday</div>
<div class="t" style="left:975.50px;width:600px;text-align:center;top:581.38px;font-size:22px;color:#000;">8/18/2023</div>
<div class="t" style="left:1139.50px;width:600px;text-align:center;top:551.38px;font-size:22px;color:#000;">Week</div>
<div class="t" style="left:1139.50px;width:600px;text-align:center;top:581.38px;font-size:22px;color:#000;">Total</div>
<div class="t" style="left:1303.50px;width:600px;text-align:center;top:551.38px;font-size:22px;color:#000;">Month</div>
<div class="t" style="left:1303.50px;width:600px;text-align:center;top:581.38px;font-size:22px;color:#000;">to Date</div>
<div class="t" style="left:330.00px;top:580.98px;font-size:22px;color:#000;text-decoration:underline;text-decoration-thickness:2px;text-underline-offset:2px">Source</div>
<div class="t" style="left:46.00px;top:609.38px;font-size:22px;color:#000;">Total Charges Posted</div>
<div class="t" style="left:330.50px;top:609.89px;font-size:18.2px;color:#000;font-style:italic">Practice PM System</div>
<div class="t" style="left:46.00px;top:637.38px;font-size:22px;color:#000;">Total Adjustments Posted</div>
<div class="t" style="left:330.50px;top:637.89px;font-size:18.2px;color:#000;font-style:italic">Practice PM System</div>
<div class="t" style="left:46.00px;top:665.38px;font-size:22px;color:#000;">Total Receipts Posted</div>
<div class="t" style="left:330.50px;top:665.89px;font-size:18.2px;color:#000;font-style:italic">Practice PM System</div>
<div class="t" style="left:46.00px;top:693.38px;font-size:22px;color:#000;">Number of Patient Visits</div>
<div class="t" style="left:330.50px;top:693.89px;font-size:18.2px;color:#000;font-style:italic">Practice Appointments</div>
<div class="t" style="left:46.00px;top:721.38px;font-size:22px;color:#000;">Total Claims Submitted</div>
<div class="t" style="left:330.50px;top:721.89px;font-size:18.2px;color:#000;font-style:italic">Practice Clearinghouse</div>
<div class="t" style="left:46.00px;top:749.38px;font-size:22px;color:#000;">Total Claims Rejected</div>
<div class="t" style="left:330.50px;top:749.89px;font-size:18.2px;color:#000;font-style:italic">Practice Clearinghouse</div>
<div class="t" style="left:46.00px;top:777.38px;font-size:22px;color:#000;">Claims Rejection Rate</div>
<div class="t" style="left:330.50px;top:777.89px;font-size:18.2px;color:#000;font-style:italic">Rejected / Submitted</div>
<div class="t" style="left:46.00px;top:805.38px;font-size:22px;color:#000;">Clean Claim Rate</div>
<div class="t" style="left:330.50px;top:805.89px;font-size:18.2px;color:#000;font-style:italic">1 - Claim Rejection Rate</div>
<div class="t" style="left:319.50px;width:600px;text-align:center;top:721.38px;font-size:22px;color:#000;">120</div>
<div class="t" style="left:483.50px;width:600px;text-align:center;top:721.38px;font-size:22px;color:#000;">125</div>
<div class="t" style="left:647.50px;width:600px;text-align:center;top:721.38px;font-size:22px;color:#000;">95</div>
<div class="t" style="left:811.50px;width:600px;text-align:center;top:721.38px;font-size:22px;color:#000;">80</div>
<div class="t" style="left:975.50px;width:600px;text-align:center;top:721.38px;font-size:22px;color:#000;">65</div>
<div class="t" style="left:1139.50px;width:600px;text-align:center;top:721.38px;font-size:22px;color:#000;">110</div>
<div class="t" style="left:319.50px;width:600px;text-align:center;top:749.38px;font-size:22px;color:#000;">6</div>
<div class="t" style="left:483.50px;width:600px;text-align:center;top:749.38px;font-size:22px;color:#000;">8</div>
<div class="t" style="left:647.50px;width:600px;text-align:center;top:749.38px;font-size:22px;color:#000;">4</div>
<div class="t" style="left:811.50px;width:600px;text-align:center;top:749.38px;font-size:22px;color:#000;">2</div>
<div class="t" style="left:975.50px;width:600px;text-align:center;top:749.38px;font-size:22px;color:#000;">3</div>
<div class="t" style="left:1139.50px;width:600px;text-align:center;top:749.38px;font-size:22px;color:#000;">6</div>
<div class="t" style="left:319.50px;width:600px;text-align:center;top:777.38px;font-size:22px;color:#000;">5.00%</div>
<div class="t" style="left:483.50px;width:600px;text-align:center;top:777.38px;font-size:22px;color:#000;">6.40%</div>
<div class="t" style="left:647.50px;width:600px;text-align:center;top:777.38px;font-size:22px;color:#000;">4.21%</div>
<div class="t" style="left:811.50px;width:600px;text-align:center;top:777.38px;font-size:22px;color:#000;">2.50%</div>
<div class="t" style="left:975.50px;width:600px;text-align:center;top:777.38px;font-size:22px;color:#000;">4.62%</div>
<div class="t" style="left:1139.50px;width:600px;text-align:center;top:777.38px;font-size:22px;color:#000;">5.45%</div>
<div class="t" style="left:319.50px;width:600px;text-align:center;top:805.38px;font-size:22px;color:#000;">95.00%</div>
<div class="t" style="left:483.50px;width:600px;text-align:center;top:805.38px;font-size:22px;color:#000;">93.60%</div>
<div class="t" style="left:647.50px;width:600px;text-align:center;top:805.38px;font-size:22px;color:#000;">95.79%</div>
<div class="t" style="left:811.50px;width:600px;text-align:center;top:805.38px;font-size:22px;color:#000;">97.50%</div>
<div class="t" style="left:975.50px;width:600px;text-align:center;top:805.38px;font-size:22px;color:#000;">95.38%</div>
<div class="t" style="left:1139.50px;width:600px;text-align:center;top:805.38px;font-size:22px;color:#000;">94.55%</div>
<div class="t" style="left:46.00px;top:860.73px;font-size:21.57px;color:#000;">Attach summary sheets from billing system, transmission reports &amp; payroll reports</div>
<div class="r" style="left:43px;top:355px;width:465px;height:165px;background:#fdfdfd"></div>
<svg class="r" style="left:0;top:0" width="600" height="600" viewBox="0 0 600 600">
<g transform="translate(70,365) scale(0.095511)">
 <path d="M370,95 C335,250 335,420 380,520 L545,405 C460,320 400,200 370,95 Z" fill="#c9d49c"/>
 <path d="M370,95 C400,200 460,320 545,405 L465,462 C410,330 378,200 370,95 Z" fill="#a9b486"/>
 <path d="M750,550 L1060,640 C900,700 750,760 610,800 C660,720 710,630 750,550 Z" fill="#c9d49c"/>
 <path d="M750,550 L1060,640 C950,650 800,660 705,665 C720,620 735,585 750,550 Z" fill="#a9b486"/>
 <path d="M735,95 C790,300 765,540 560,820 C400,760 250,700 60,655 C300,590 450,500 560,410 C650,320 710,200 735,95 Z" fill="#c9d49c" stroke="#fff" stroke-width="13" stroke-linejoin="round"/>
 <path d="M735,95 C710,200 650,320 560,410 C450,500 300,590 60,655 C160,680 260,710 370,745 C560,560 705,350 735,95 Z" fill="#a9b486"/>
 <circle cx="548" cy="137" r="56" fill="#a9b486"/>
</g>
<g transform="translate(40,420) scale(0.106758)">
 <path d="M30,555 C150,440 260,390 372,375 L356,545 C250,520 130,530 30,555 Z" fill="#f3b48e"/>
 <path d="M30,555 C120,500 240,470 362,462 L356,545 C250,520 130,530 30,555 Z" fill="#e8976a"/>
 <path d="M575,630 L705,420 L780,815 Z" fill="#f3b48e"/>
 <path d="M575,630 L650,555 L780,815 Z" fill="#e8976a"/>
 <path d="M330,75 L700,375 C600,560 420,730 200,830 C330,680 395,480 380,300 C372,200 355,130 330,75 Z" fill="#f3b48e" stroke="#fff" stroke-width="13" stroke-linejoin="round"/>
 <path d="M330,75 L550,255 C540,450 470,650 230,815 C330,680 395,480 380,300 C372,200 355,130 330,75 Z" fill="#e8976a"/>
 <circle cx="145" cy="672" r="48" fill="#e8976a"/>
</g>
<g transform="translate(120,420) scale(0.106758)">
 <path d="M800,545 C690,440 570,380 450,365 L468,532 C580,500 700,510 800,545 Z" fill="#a8cde2"/>
 <path d="M800,545 C700,480 580,455 460,455 L468,532 C580,500 700,510 800,545 Z" fill="#87b1d1"/>
 <path d="M255,630 L115,420 L50,815 Z" fill="#a8cde2"/>
 <path d="M255,630 L185,545 L50,815 Z" fill="#87b1d1"/>
 <path d="M480,65 L120,375 C250,600 420,760 640,815 C480,640 425,420 440,230 C445,160 460,110 480,65 Z" fill="#a8cde2" stroke="#fff" stroke-width="13" stroke-linejoin="round"/>
 <path d="M480,65 L270,250 C290,450 400,660 620,800 C480,640 425,420 440,230 C445,160 460,110 480,65 Z" fill="#87b1d1"/>
 <circle cx="685" cy="655" r="48" fill="#87b1d1"/>
</g>
</svg>
<div class="r" style="left:219px;top:355px;width:2.2px;height:165px;background:#5f8091"></div>
<div class="t" style="left:243.50px;top:393.26px;font-size:31px;color:#2b5870;letter-spacing:4.0px;-webkit-text-stroke:0.45px #2b5870">PEDIATRIC</div>
<div class="t" style="left:243.50px;top:427.26px;font-size:31px;color:#2b5870;letter-spacing:4.68px;-webkit-text-stroke:0.45px #2b5870">MANAGEMENT</div>
<div class="t" style="left:244.50px;top:461.86px;font-size:31px;color:#2b5870;letter-spacing:2.98px;-webkit-text-stroke:0.45px #2b5870">INSTITUTE</div>
<div class="r" style="left:246.2px;top:479.6px;width:248.5px;height:15.3px;background:#2b5870"></div>
<div class="t" style="left:250.50px;top:487.19px;font-size:13.6px;color:#fff;letter-spacing:0.26px;-webkit-text-stroke:0.35px #fff">HELPING PEDIATRICIANS SUCCEED</div>
</body></html>
